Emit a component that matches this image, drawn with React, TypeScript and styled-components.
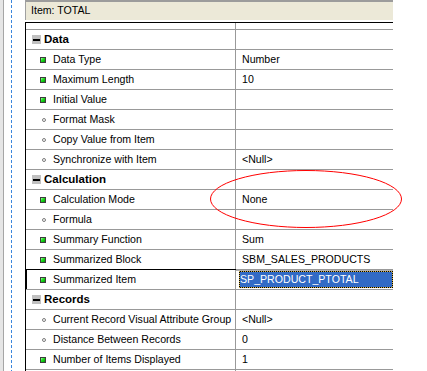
import React from "react";
import styled, { createGlobalStyle } from "styled-components";

type Prop = {
  name: string;
  value?: string;
  kind: "required" | "optional";
  selected?: boolean;
};

type Section = {
  title: string;
  props: Prop[];
};

const sections: Section[] = [
  {
    title: "Data",
    props: [
      { name: "Data Type", value: "Number", kind: "required" },
      { name: "Maximum Length", value: "10", kind: "required" },
      { name: "Initial Value", kind: "required" },
      { name: "Format Mask", kind: "optional" },
      { name: "Copy Value from Item", kind: "optional" },
      { name: "Synchronize with Item", value: "<Null>", kind: "optional" },
    ],
  },
  {
    title: "Calculation",
    props: [
      { name: "Calculation Mode", value: "None", kind: "required" },
      { name: "Formula", kind: "optional" },
      { name: "Summary Function", value: "Sum", kind: "required" },
      { name: "Summarized Block", value: "SBM_SALES_PRODUCTS", kind: "required" },
      { name: "Summarized Item", value: "SP_PRODUCT_PTOTAL", kind: "required", selected: true },
    ],
  },
  {
    title: "Records",
    props: [
      { name: "Current Record Visual Attribute Group", value: "<Null>", kind: "optional" },
      { name: "Distance Between Records", value: "0", kind: "optional" },
      { name: "Number of Items Displayed", value: "1", kind: "required" },
      { name: "", kind: "optional" },
    ],
  },
];

const GlobalStyle = createGlobalStyle`
  html, body {
    margin: 0;
    padding: 0;
    background: #fff;
    overflow: hidden;
  }
  body {
    font-family: "Liberation Sans", Arial, sans-serif;
    font-size: 10.6px;
    color: #000;
  }
`;

const App = () => {
  return (
    <>
      <GlobalStyle />
      <Page>
        <Gutter />
        <Panel>
          <Header>Item: TOTAL</Header>
          <Table>
            <Row $height={6}>
              <NameCell />
              <ValueCell />
            </Row>
            {sections.map((section) => (
              <React.Fragment key={section.title}>
                <Row>
                  <SectionCell>
                    <Collapse>
                      <MinusBar />
                    </Collapse>
                    {section.title}
                  </SectionCell>
                  <ValueCell />
                </Row>
                {section.props.map((p, i) => (
                  <Row key={section.title + i}>
                    <NameCell $selected={p.selected}>
                      <BulletSlot>
                        {p.name && (p.kind === "required" ? <RequiredDot /> : <OptionalDot />)}
                      </BulletSlot>
                      {p.name}
                    </NameCell>
                    {p.selected ? (
                      <ValueCell $selected>
                        <FocusBox>
                          <EditText>{p.value}</EditText>
                        </FocusBox>
                      </ValueCell>
                    ) : (
                      <ValueCell>{p.value}</ValueCell>
                    )}
                  </Row>
                ))}
              </React.Fragment>
            ))}
          </Table>
        </Panel>
        <Highlight width="196" height="62" viewBox="0 0 196 62">
          <ellipse cx="98" cy="31" rx="95.5" ry="28.5" fill="none" stroke="#ff0000" strokeWidth="1" />
        </Highlight>
      </Page>
    </>
  );
};

export default App;

const Page = styled.div`
  position: relative;
  display: flex;
  align-items: flex-start;
  width: 427px;
  height: 371px;
  overflow: hidden;
`;

const Gutter = styled.div`
  width: 25px;
  height: 100%;
  flex-shrink: 0;
  background:
    repeating-linear-gradient(to bottom, #3a86dc 0 3px, transparent 3px 5px) 11px 0 / 1px 100% no-repeat,
    linear-gradient(to right, #e6e6e6 0 3px, #a6a6a6 3px 4px, #ffffff 4px);
`;

const Panel = styled.div`
  width: 368px;
  flex-shrink: 0;
  display: flex;
  flex-direction: column;
`;

const Header = styled.div`
  height: 20px;
  flex-shrink: 0;
  box-sizing: border-box;
  border-top: 2px solid #9c9c9c;
  border-left: 1px solid #a0a0a0;
  background: #ece9d8;
  padding-left: 5px;
  line-height: 17px;
`;

const Table = styled.div`
  flex-shrink: 0;
  border-top: 1px solid #000;
  border-left: 1px solid #000;
  margin-top: 2px;
  display: flex;
  flex-direction: column;
`;

const Row = styled.div<{ $height?: number }>`
  display: flex;
  flex-shrink: 0;
  height: ${(p) => p.$height ?? 19}px;
  border-bottom: 1px solid #999;
  line-height: 19px;
`;

const NameCell = styled.div<{ $selected?: boolean }>`
  width: 210px;
  flex-shrink: 0;
  box-sizing: border-box;
  border-right: 1px solid #999;
  display: flex;
  align-items: center;
  white-space: nowrap;
  overflow: hidden;
  position: relative;
  box-shadow: ${(p) => (p.$selected ? "0 -1px 0 #000, inset 1px 0 0 #000" : "none")};
`;

const SectionCell = styled(NameCell)`
  padding-left: 6px;
  font-weight: bold;
  font-size: 11.5px;
`;

const Collapse = styled.span`
  width: 9px;
  height: 9px;
  background: #c0c0c0;
  display: flex;
  align-items: center;
  justify-content: center;
  margin-right: 3px;
  flex-shrink: 0;
`;

const MinusBar = styled.span`
  width: 7px;
  height: 2px;
  background: #000;
`;

const BulletSlot = styled.span`
  width: 13px;
  margin-left: 14px;
  flex-shrink: 0;
  display: flex;
  align-items: center;
`;

const RequiredDot = styled.span`
  width: 4px;
  height: 4px;
  border: 1px solid #3c3c3c;
  background: linear-gradient(135deg, #b8ffb8 0%, #20e020 40%, #009a00 100%);
  margin-top: 1px;
`;

const OptionalDot = styled.span`
  width: 2px;
  height: 2px;
  border: 1px solid #7a7a7a;
  border-radius: 50%;
  margin-left: 2px;
  margin-top: 1px;
`;

const ValueCell = styled.div<{ $selected?: boolean }>`
  flex: 1;
  padding-left: ${(p) => (p.$selected ? "3px" : "6px")};
  white-space: nowrap;
  overflow: hidden;
  display: flex;
  align-items: ${(p) => (p.$selected ? "flex-start" : "center")};
  box-shadow: ${(p) => (p.$selected ? "inset 0 1px 0 #b0b0b0" : "none")};
`;

const FocusBox = styled.div`
  flex: 1;
  margin-top: 1px;
  height: 17px;
  box-sizing: border-box;
  padding: 1px;
  background: repeating-conic-gradient(#000 0 25%, #d6b24a 0 50%) 0 0 / 2px 2px;
  display: flex;
`;

const EditText = styled.span`
  flex: 1;
  background: #316ac5;
  color: #fff;
  line-height: 15px;
  overflow: hidden;
`;

const Highlight = styled.svg`
  position: absolute;
  left: 208px;
  top: 168px;
  pointer-events: none;
`;
